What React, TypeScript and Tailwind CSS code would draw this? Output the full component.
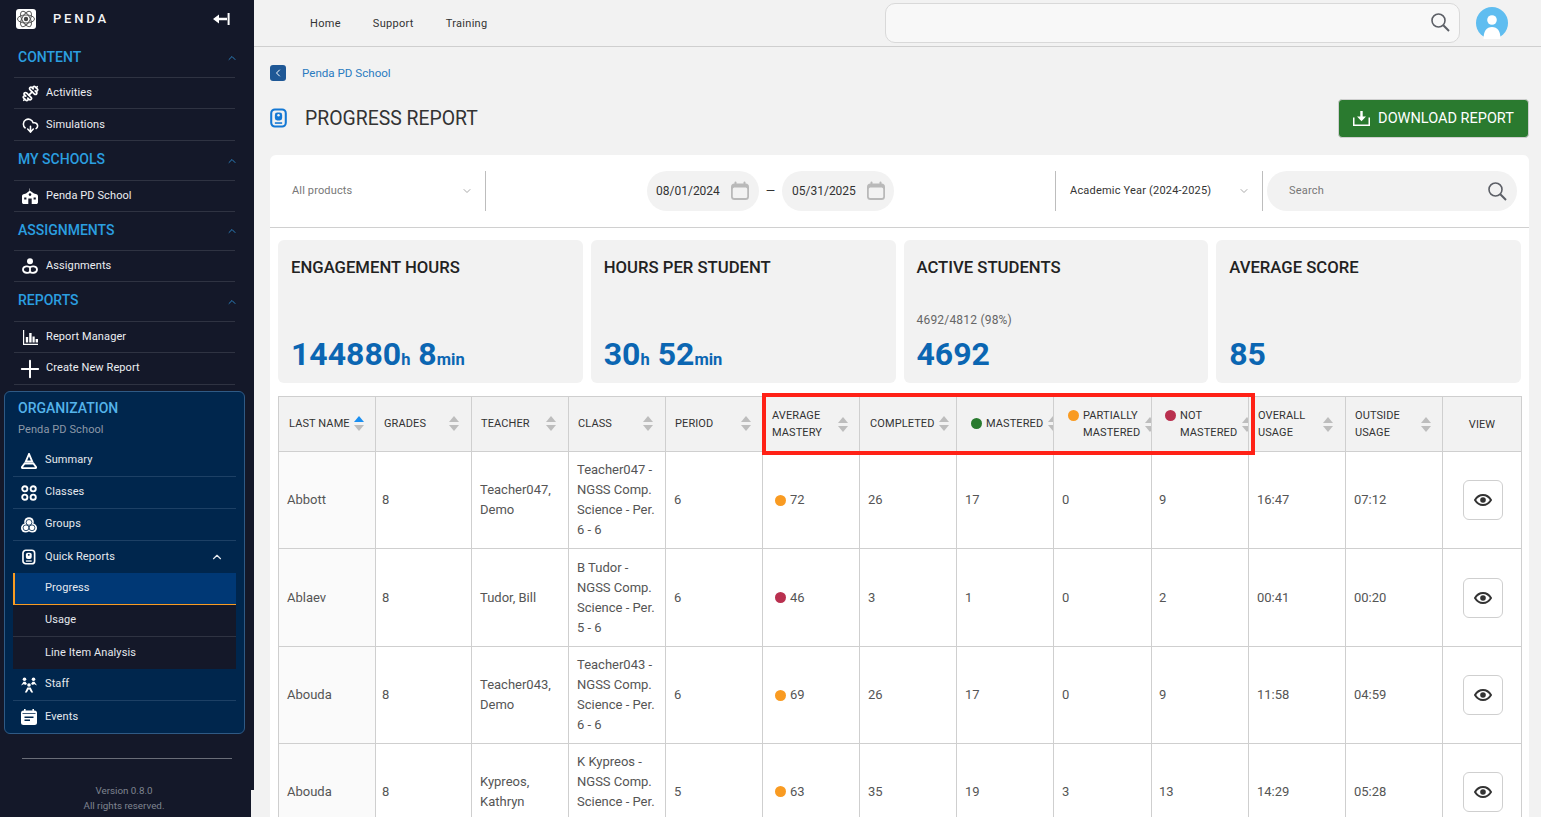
import React from 'react';
import { ChevronUp, ChevronDown, ChevronLeft, Dumbbell, CloudDownload, Plus } from 'lucide-react';

const Logo = () => (
  <svg width="20" height="20" viewBox="0 0 20 20">
    <rect width="20" height="20" rx="3" fill="#fff" />
    <g fill="none" stroke="#555" strokeWidth="1">
      <ellipse cx="10" cy="10" rx="8.5" ry="4" />
      <ellipse cx="10" cy="10" rx="8.5" ry="4" transform="rotate(60 10 10)" />
      <ellipse cx="10" cy="10" rx="8.5" ry="4" transform="rotate(120 10 10)" />
    </g>
    <circle cx="10" cy="10" r="2.2" fill="#444" />
  </svg>
);

const CollapseIcon = () => (
  <svg width="17" height="12" viewBox="0 0 17 12" fill="#fff">
    <path d="M0 6 L6 1.5 V4.7 H14 V7.3 H6 V10.5 Z" />
    <rect x="14.6" y="0" width="2" height="12" />
  </svg>
);

const SchoolIcon = () => (
  <svg width="16" height="16" viewBox="0 0 16 16">
    <path fill="#fff" d="M8 .5v2.2L12 5.5l2.6.8c.8.3 1.4 1 1.4 1.9v6c0 1-.8 1.8-1.8 1.8H1.8C.8 16 0 15.200 0 14.200v-6c0-.9.6-1.600 1.400-1.900L4 5.500l3.500-2.800V.5z" />
    <circle cx="8" cy="6.600" r="1.300" fill="#141829" />
    <path fill="#141829" d="M6.300 10.500h3.400V16H6.300zM2.200 9.500h2.200v2H2.200zM11.600 9.500h2.200v2h-2.200z" />
  </svg>
);

const ReaderIcon = () => (
  <svg width="16" height="16" viewBox="0 0 16 16" fill="none">
    <circle cx="8" cy="3.200" r="3" fill="#fff" />
    <path stroke="#fff" strokeWidth="1.800" d="M8 9.500C7 7.800 1 7.500 1 11.500S7 15.500 8 13.500C9 15.500 15 15.500 15 11.500S9 7.800 8 9.500zM8 9.500v4" />
  </svg>
);

const BarsIcon = () => (
  <svg width="15" height="15" viewBox="0 0 15 15" fill="#fff">
    <path d="M0 0h1.200v13.800H15V15H0z" />
    <path d="M2.800 7h2.400v5.500H2.800zM6.200 3h2.400v9.500H6.200zM9.500 6.500h2.200v6H9.500zM12.600 9H15v3.500h-2.400z" />
  </svg>
);

const ConeIcon = () => (
  <svg width="16" height="16" viewBox="0 0 16 16" fill="none" stroke="#fff" strokeWidth="1.900">
    <path d="M8 1 L4.800 8.500H11.200Z" />
    <path d="M3.600 10.500 L1 14c-.3.600 0 1.100.7 1.100h12.600c.7 0 1-.5.700-1.100l-2.600-3.500z" />
  </svg>
);

const FourCirclesIcon = () => (
  <svg width="16" height="16" viewBox="0 0 16 16" fill="none" stroke="#fff" strokeWidth="1.900">
    <circle cx="3.800" cy="3.800" r="2.600" />
    <circle cx="12.200" cy="3.800" r="2.600" />
    <circle cx="3.800" cy="12.200" r="2.600" />
    <circle cx="12.200" cy="12.200" r="2.600" />
  </svg>
);

const GroupsIcon = () => (
  <svg width="16" height="16" viewBox="0 0 16 16" fill="#fff">
    <circle cx="8" cy="5" r="4.800" />
    <circle cx="4.600" cy="11" r="4.600" />
    <circle cx="11.400" cy="11" r="4.600" />
    <g fill="none" stroke="#00264d" strokeWidth="0.800">
      <circle cx="8" cy="5.400" r="2.900" />
      <circle cx="5" cy="10.800" r="2.900" />
      <circle cx="11" cy="10.800" r="2.900" />
    </g>
  </svg>
);

const ReportIcon = ({ color, inner, size = 16 }: { color: string; inner: string; size?: number }) => (
  <svg width={size * 0.85} height={size} viewBox="0 0 14 16" fill="none">
    <rect x="1" y="1" width="12" height="14" rx="3" stroke={color} strokeWidth="1.700" />
    <rect x="4" y="3.500" width="6" height="6.500" rx="2" fill={color} />
    <circle cx="7" cy="5.800" r="1" fill={inner} />
    <rect x="4" y="11.500" width="6" height="1.300" fill={color} />
  </svg>
);

const StaffIcon = () => (
  <svg width="16" height="16" viewBox="0 0 16 16" fill="#fff">
    <circle cx="3.500" cy="2.200" r="1.800" />
    <circle cx="12.500" cy="2.200" r="1.800" />
    <circle cx="8" cy="8" r="1.800" />
    <path d="M0 8.500 2.500 4.800h2L6 7 4 8 3 7zM16 8.500 13.500 4.800h-2L10 7l2 1 1-1zM3.800 15.500 6.300 10.500h3.400l2.500 5h-2L8.500 12.500h-1L5.800 15.500z" />
  </svg>
);

const EventsIcon = () => (
  <svg width="16" height="16" viewBox="0 0 16 16">
    <rect x="0" y="1.500" width="16" height="14.500" rx="2.500" fill="#fff" />
    <rect x="3" y="0" width="1.600" height="3" fill="#fff" />
    <rect x="11.400" y="0" width="1.600" height="3" fill="#fff" />
    <path fill="#00264d" d="M1.500 4.300h13V5h-13zM3.500 7.500h9v1.500h-9zM3.500 10.500h5.500V12H3.500z" />
  </svg>
);

const CalendarIcon = () => (
  <svg width="20" height="20" viewBox="0 0 20 20" fill="none">
    <rect x="1" y="2.500" width="18" height="16.500" rx="3.500" fill="#b9b9b9" />
    <rect x="2.800" y="6.500" width="14.400" height="10.500" rx="1.500" fill="#f2f2f2" />
    <rect x="4.500" y="0.500" width="2" height="4" rx="1" fill="#b9b9b9" />
    <rect x="13.500" y="0.500" width="2" height="4" rx="1" fill="#b9b9b9" />
  </svg>
);

const MagnifierIcon = () => (
  <svg width="19" height="19" viewBox="0 0 19 19" fill="none" stroke="#5c5f66">
    <circle cx="7.500" cy="7.500" r="6.500" strokeWidth="1.600" />
    <path d="M12.300 12.300 18 18" strokeWidth="2" />
  </svg>
);

const AvatarIcon = () => (
  <svg width="32" height="32" viewBox="0 0 32 32">
    <circle cx="16" cy="16" r="16" fill="#5fbdf0" />
    <circle cx="16" cy="13" r="4.800" fill="#fff" />
    <path fill="#fff" d="M7.500 32c0-8 3-12 8.500-12s8.500 4 8.500 12z" />
  </svg>
);

const TrayDownloadIcon = () => (
  <svg width="17" height="15" viewBox="0 0 17 15" fill="#fff">
    <path d="M7.300 0h2.400v5.500H13L8.500 10.200 4 5.500h3.300z" />
    <path d="M0 6.500h1.500v7h14v-7H17V15H0z" />
  </svg>
);

const EyeIcon = () => (
  <svg width="18" height="12" viewBox="0 0 18 12" fill="none">
    <path d="M1 6C3 2.700 5.700 1 9 1s6 1.700 8 5c-2 3.300-4.700 5-8 5S3 9.300 1 6z" stroke="#333" strokeWidth="2" />
    <circle cx="9" cy="6" r="2.800" fill="#333" />
  </svg>
);

function SortIcon({ active }: { active?: boolean }) {
  return (
    <span className="flex w-3 shrink-0 flex-col items-center gap-[3px]">
      <span className={`h-0 w-0 border-x-[5px] border-b-[6px] border-x-transparent ${active ? 'border-b-[#1b8ff0]' : 'border-b-[#bdbdbd]'}`} />
      <span className="h-0 w-0 border-x-[5px] border-t-[6px] border-x-transparent border-t-[#bdbdbd]" />
    </span>
  );
}

function SectionHeader({ title, h }: { title: string; h: string }) {
  return (
    <div className={`flex items-center justify-between border-b border-[#2f3342] pl-1 ${h}`}>
      <span className="text-[14px] font-medium text-[#2b9fe0]">{title}</span>
      <ChevronUp className="mr-[-3px] mt-[2px] h-3 w-3 text-[#2b80bd]" strokeWidth={2} />
    </div>
  );
}

function NavRow({ icon, label, h = 'h-[31px]' }: { icon: React.ReactNode; label: string; h?: string }) {
  return (
    <div className={`flex items-center border-b border-[#2f3342] ${h}`}>
      <span className="flex w-8 shrink-0 items-center justify-center">{icon}</span>
      <span className="text-[11px] tracking-[0.1px] text-[#eceef2]">{label}</span>
    </div>
  );
}

function OrgRow({ icon, label, last, right }: { icon: React.ReactNode; label: string; last?: boolean; right?: React.ReactNode }) {
  return (
    <div className={`flex h-8 items-center ${last ? '' : 'border-b border-[#1d4065]'}`}>
      <span className="flex w-8 shrink-0 items-center justify-center">{icon}</span>
      <span className="flex-1 text-[11px] tracking-[0.1px] text-[#e6e9ee]">{label}</span>
      {right}
    </div>
  );
}

function SubRow({ label, active, last }: { label: string; active?: boolean; last?: boolean }) {
  return (
    <div
      className={`flex h-8 items-center text-[11px] tracking-[0.1px] text-[#e6e9ee] ${
        active ? 'border-l-2 border-[#f99b22] bg-[#003875] pl-[30px]' : 'bg-[#141829] pl-[32px]'
      } ${last ? '' : 'border-b border-[#2f3342]'}`}
    >
      {label}
    </div>
  );
}

function Sidebar() {
  return (
    <aside className="relative flex h-screen w-[254px] shrink-0 flex-col bg-[#141829]">
      <div className="flex h-[37px] shrink-0 items-center pl-4 pr-[24px]">
        <Logo />
        <span className="ml-[17px] flex-1 text-[13px] font-medium tracking-[2.8px] text-[#f2f3f5]">PENDA</span>
        <CollapseIcon />
      </div>
      <div className="pl-[14px] pr-[19px]">
        <SectionHeader title="CONTENT" h="h-[41px]" />
        <NavRow icon={<Dumbbell className="h-[17px] w-[17px] text-white" strokeWidth={2.4} />} label="Activities" />
        <NavRow icon={<CloudDownload className="h-[17px] w-[17px] text-white" strokeWidth={2.2} />} label="Simulations" h="h-[32px] pt-[1px]" />
        <SectionHeader title="MY SCHOOLS" h="h-[40px] pb-[2px]" />
        <NavRow icon={<SchoolIcon />} label="Penda PD School" />
        <SectionHeader title="ASSIGNMENTS" h="h-[39px] pb-[2px]" />
        <NavRow icon={<ReaderIcon />} label="Assignments" />
        <SectionHeader title="REPORTS" h="h-[40px] pb-[2px]" />
        <NavRow icon={<BarsIcon />} label="Report Manager" />
        <NavRow icon={<Plus className="h-7 w-7 text-white" strokeWidth={1.7} />} label="Create New Report" h="h-[32px]" />
      </div>
      <div className="ml-1 mt-[6px] w-[241px] rounded-md border border-[#2f5a85] bg-[#00264d] pl-2 pr-2 pt-[7px]">
        <div className="pl-[5px] text-[14px] font-medium leading-[18px] text-[#54b3ea]">ORGANIZATION</div>
        <div className="mb-[8px] mt-[6px] pl-[5px] text-[11px] leading-[14px] tracking-[0.1px] text-[#8d99a8]">Penda PD School</div>
        <OrgRow icon={<ConeIcon />} label="Summary" />
        <OrgRow icon={<FourCirclesIcon />} label="Classes" />
        <OrgRow icon={<GroupsIcon />} label="Groups" />
        <OrgRow
          icon={<ReportIcon color="#fff" inner="#00264d" />}
          label="Quick Reports"
          last
          right={<ChevronUp className="mr-[12px] h-3.5 w-3.5 text-[#e6e9ee]" strokeWidth={2} />}
        />
        <SubRow label="Progress" active />
        <SubRow label="Usage" />
        <SubRow label="Line Item Analysis" last />
        <OrgRow icon={<StaffIcon />} label="Staff" />
        <OrgRow icon={<EventsIcon />} label="Events" last />
      </div>
      <div className="mx-[22px] mt-[24px] border-t border-[#6a6d78]" />
      <div className="mt-[24px] pr-[6px] text-center text-[9.800px] leading-[15px] text-[#7f8490]">
        <div>Version 0.8.0</div>
        <div>All rights reserved.</div>
      </div>
      <div className="absolute bottom-0 right-0 top-[790px] w-[3px] bg-[#f2f2f2]" />
    </aside>
  );
}

function TopBar() {
  return (
    <header className="flex h-[47px] shrink-0 items-center border-b border-[#cfcfcf] pb-[1px]">
      <nav className="ml-[56px] mt-1 flex gap-8 text-[11px] tracking-[0.3px] text-[#333]">
        <span>Home</span>
        <span>Support</span>
        <span>Training</span>
      </nav>
      <div className="ml-[398px] flex h-10 w-[575px] items-center justify-end rounded-[10px] border border-[#d9d9d9] bg-[#f8f8f8] pr-[9px]">
        <MagnifierIcon />
      </div>
      <div className="ml-4">
        <AvatarIcon />
      </div>
    </header>
  );
}

function StatCard({ title, sub, children }: { title: string; sub?: string; children: React.ReactNode }) {
  return (
    <div className="flex h-[143px] flex-col rounded-md bg-[#f2f2f2] px-[13px] pb-[9px] pt-[18px]">
      <div className="text-[16.700px] font-medium leading-5 text-[#222]">{title}</div>
      <div className="mt-auto h-[18px] text-[12px] tracking-[0.2px] text-[#666]">{sub}</div>
      <div className="mt-[6px] text-[32px] font-bold leading-[39px] text-[#0b66b2]">{children}</div>
    </div>
  );
}

const Unit = ({ children }: { children: React.ReactNode }) => <span className="text-[16.500px] leading-none">{children}</span>;

const Dot = ({ color, className = '' }: { color: string; className?: string }) => (
  <span className={`inline-block h-[11px] w-[11px] shrink-0 rounded-full ${className}`} style={{ backgroundColor: color }} />
);

const ORANGE = '#f99b22';
const RED = '#b9304f';
const GREEN = '#287a2e';

type Col = { label: React.ReactNode; pad: string; w: string; dot?: string; two?: boolean; active?: boolean };

const columns: Col[] = [
  { label: 'LAST NAME', w: 'w-[97px]', pad: 'pl-[10px] pr-[10px]', active: true },
  { label: 'GRADES', w: 'w-[96px]', pad: 'pl-2 pr-[11px]' },
  { label: 'TEACHER', w: 'w-[97px]', pad: 'pl-[9px] pr-[11px]' },
  { label: 'CLASS', w: 'w-[97px]', pad: 'pl-[9px] pr-[11px]' },
  { label: 'PERIOD', w: 'w-[97px]', pad: 'pl-[9px] pr-[10px]' },
  { label: <>AVERAGE<br />MASTERY</>, w: 'w-[97px]', pad: 'pl-[9px] pr-[10px]' },
  { label: 'COMPLETED', w: 'w-[97px]', pad: 'pl-[10px] pr-[11px]' },
  { label: 'MASTERED', w: 'w-[97px]', pad: 'pl-[14px] pr-3', dot: GREEN },
  { label: <>PARTIALLY<br />MASTERED</>, w: 'w-[98px]', pad: 'pl-[14px] pr-3', dot: ORANGE, two: true },
  { label: <>NOT<br />MASTERED</>, w: 'w-[97px]', pad: 'pl-[13px] pr-3', dot: RED, two: true },
  { label: <>OVERALL<br />USAGE</>, w: 'w-[97px]', pad: 'pl-[9px] pr-[11px]' },
  { label: <>OUTSIDE<br />USAGE</>, w: 'w-[97px]', pad: 'pl-[9px] pr-[10px]' },
];

const rows = [
  { h: 'h-[97px]', last: 'Abbott', grade: '8', teacher: ['Teacher047,', 'Demo'], cls: ['Teacher047 -', 'NGSS Comp.', 'Science - Per.', '6 - 6'], period: '6', dot: ORANGE, avg: '72', done: '26', m: '17', p: '0', n: '9', overall: '16:47', outside: '07:12' },
  { h: 'h-[98px]', last: 'Ablaev', grade: '8', teacher: ['Tudor, Bill'], cls: ['B Tudor -', 'NGSS Comp.', 'Science - Per.', '5 - 6'], period: '6', dot: RED, avg: '46', done: '3', m: '1', p: '0', n: '2', overall: '00:41', outside: '00:20' },
  { h: 'h-[97px]', last: 'Abouda', grade: '8', teacher: ['Teacher043,', 'Demo'], cls: ['Teacher043 -', 'NGSS Comp.', 'Science - Per.', '6 - 6'], period: '6', dot: ORANGE, avg: '69', done: '26', m: '17', p: '0', n: '9', overall: '11:58', outside: '04:59' },
  { h: 'h-[96px]', last: 'Abouda', grade: '8', teacher: ['Kypreos,', 'Kathryn'], cls: ['K Kypreos -', 'NGSS Comp.', 'Science - Per.', '5 - 6'], period: '5', dot: ORANGE, avg: '63', done: '35', m: '19', p: '3', n: '13', overall: '14:29', outside: '05:28' },
];

const Lines = ({ items }: { items: string[] }) => (
  <>
    {items.map((t) => (
      <div key={t}>{t}</div>
    ))}
  </>
);

const td = 'border border-[#cfcfcf] align-middle';
const cell = `${td} px-2`;

function ReportTable() {
  return (
    <div className="relative mx-2 mt-[13px]">
      <table className="w-[1243px] table-fixed border-collapse text-[13px] leading-5 text-[#555]">
        <colgroup>
          {columns.map((c, i) => (
            <col key={i} className={c.w} />
          ))}
          <col className="w-[79px]" />
        </colgroup>
        <thead>
          <tr className="h-[55px] bg-[#f2f2f2] text-[11px] font-normal leading-[17px] tracking-[0.1px] text-[#333]">
            {columns.map((c, i) => (
              <th key={i} className={`overflow-hidden border border-[#cfcfcf] p-0 text-left font-normal ${i === 0 ? 'relative z-10 shadow-[2px_0_4px_rgba(0,0,0,0.1)]' : ''}`}>
                <div className={`flex items-center justify-between ${c.pad} ${typeof c.label === 'string' ? 'mt-[-1px]' : ''}`}>
                  <div className={`flex shrink-0 gap-[4px] ${c.two ? 'items-start' : 'items-center'}`}>
                    {c.dot && <Dot color={c.dot} className={c.two ? 'mt-[3px]' : ''} />}
                    <span className="whitespace-nowrap">{c.label}</span>
                  </div>
                  <span className={`shrink-0 ${c.dot ? 'ml-[4px]' : 'ml-[3px]'}`}>
                    <SortIcon active={c.active} />
                  </span>
                </div>
              </th>
            ))}
            <th className="border border-[#cfcfcf] p-0 text-center font-normal">VIEW</th>
          </tr>
        </thead>
        <tbody>
          {rows.map((r, i) => (
            <tr key={i} className={r.h}>
              <td className={`${cell} relative z-10 bg-[#fafafa] shadow-[2px_0_4px_rgba(0,0,0,0.1)]`}>{r.last}</td>
              <td className={`${td} px-[6px]`}>{r.grade}</td>
              <td className={cell}><Lines items={r.teacher} /></td>
              <td className={cell}><Lines items={r.cls} /></td>
              <td className={cell}>{r.period}</td>
              <td className={cell}>
                <div className="flex items-center gap-1 pl-1">
                  <Dot color={r.dot} />
                  <span>{r.avg}</span>
                </div>
              </td>
              <td className={cell}>{r.done}</td>
              <td className={cell}>{r.m}</td>
              <td className={cell}>{r.p}</td>
              <td className={`${td} px-[7px]`}>{r.n}</td>
              <td className={cell}>{r.overall}</td>
              <td className={cell}>{r.outside}</td>
              <td className={cell}>
                <div className="flex justify-center pl-[2px]">
                  <button className="flex h-10 w-10 shrink-0 items-center justify-center rounded-md border border-[#cfcfcf] bg-white">
                    <EyeIcon />
                  </button>
                </div>
              </td>
            </tr>
          ))}
        </tbody>
      </table>
      <div className="absolute left-[484px] top-[-3px] h-[62px] w-[493px] border-4 border-[#ff2116]" />
    </div>
  );
}

function Filters() {
  return (
    <div className="flex h-[73px] items-center border-b border-[#d0d0d0]">
      <div className="flex h-10 w-[216px] shrink-0 items-center justify-between border-r border-[#bdbdbd] pl-[22px] pr-[12px] text-[11px] tracking-[0.15px] text-[#777]">
        <span>All products</span>
        <ChevronDown className="h-3 w-3 text-[#aaa]" />
      </div>
      <div className="flex flex-1 items-center justify-center text-[12px] text-[#333]">
        <div className="flex h-10 w-28 items-center justify-between rounded-full bg-[#f2f2f2] pl-[9px] pr-[9px]">
          <span>08/01/2024</span>
          <CalendarIcon />
        </div>
        <span className="w-[23px] text-center">—</span>
        <div className="flex h-10 w-28 items-center justify-between rounded-full bg-[#f2f2f2] pl-[10px] pr-[8px]">
          <span>05/31/2025</span>
          <CalendarIcon />
        </div>
      </div>
      <div className="flex h-10 w-[208px] shrink-0 items-center justify-between border-x border-[#bdbdbd] pl-[14px] pr-[12px] text-[11px] tracking-[0.2px] text-[#333]">
        <span>Academic Year (2024-2025)</span>
        <ChevronDown className="h-3 w-3 text-[#aaa]" />
      </div>
      <div className="ml-[4px] mr-[12px] flex h-10 w-[250px] shrink-0 items-center justify-between rounded-full bg-[#f2f2f2] pl-[22px] pr-[10px] text-[11px] tracking-[0.2px] text-[#777]">
        <span>Search</span>
        <MagnifierIcon />
      </div>
    </div>
  );
}

export default function App() {
  return (
    <div className="flex h-screen overflow-hidden bg-[#f2f2f2] font-['Roboto',sans-serif]">
      <Sidebar />
      <main className="flex min-w-0 flex-1 flex-col overflow-hidden">
        <TopBar />
        <div className="pl-4 pr-3">
          <div className="mt-[18px] flex h-4 items-center">
            <span className="flex h-4 w-4 items-center justify-center rounded-[3px] bg-[#1f5896]">
              <ChevronLeft className="h-3 w-3 text-white" strokeWidth={2} />
            </span>
            <span className="ml-4 mt-[1px] text-[11.600px] text-[#2a7bc0]">Penda PD School</span>
          </div>
          <div className="mt-[18px] flex h-[39px] items-center justify-between">
            <div className="flex items-center">
              <ReportIcon color="#1478d4" inner="#f2f2f2" size={20} />
              <h1 className="ml-[18px] text-[19.400px] font-normal text-[#333]">PROGRESS REPORT</h1>
            </div>
            <button className="flex h-[39px] w-[191px] items-center justify-center gap-[8px] rounded border border-[#cfcfcf] bg-[#2a7a2f] text-[14.500px] text-white">
              <TrayDownloadIcon />
              DOWNLOAD REPORT
            </button>
          </div>
          <div className="mt-[17px] rounded-md bg-white pb-6">
            <Filters />
            <div className="mx-2 mt-3 grid grid-cols-4 gap-2">
              <StatCard title="ENGAGEMENT HOURS">144880<Unit>h</Unit> 8<Unit>min</Unit></StatCard>
              <StatCard title="HOURS PER STUDENT">30<Unit>h</Unit> 52<Unit>min</Unit></StatCard>
              <StatCard title="ACTIVE STUDENTS" sub="4692/4812 (98%)">4692</StatCard>
              <StatCard title="AVERAGE SCORE">85</StatCard>
            </div>
            <ReportTable />
          </div>
        </div>
      </main>
    </div>
  );
}
